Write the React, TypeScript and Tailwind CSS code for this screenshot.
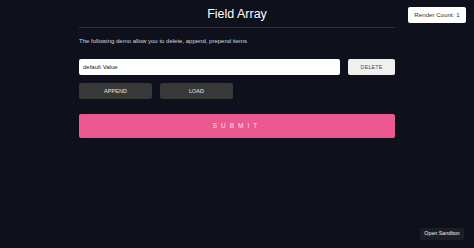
export default function App() {
  return (
    <div className="relative min-h-[248px] w-full bg-[#0e101c] font-['Liberation_Sans',Arial,sans-serif] text-white">
      <div className="absolute right-2 top-[7px] flex h-4 w-[58px] items-center justify-center rounded-[2px] bg-white text-[6.2px] text-[#333]">
        Render Count: 1
      </div>

      <form className="mx-auto flex w-[316px] flex-col pt-[7px]">
        <h1 className="pb-[5px] text-center text-[12.5px] leading-[15px]">Field Array</h1>
        <div className="h-px w-full bg-[#2c2f3d]" />
        <p className="mt-[9px] text-[6px] leading-[8px] text-[#d8d8de]">
          The following demo allow you to delete, append, prepend items
        </p>

        <div className="mt-[14px] flex gap-2">
          <input
            defaultValue="default Value"
            className="h-4 w-[261px] rounded-[2px] bg-white px-1 text-[6px] text-[#222] outline-none"
          />
          <button type="button" className="h-4 w-[47px] rounded-[2px] bg-[#f0f0f0] text-[5.6px] text-[#555]">
            DELETE
          </button>
        </div>

        <div className="mt-2 flex gap-2">
          <button type="button" className="h-4 w-[73px] rounded-[2px] bg-[#383838] text-[5.6px] text-[#e5e5e5]">
            APPEND
          </button>
          <button type="button" className="h-4 w-[73px] rounded-[2px] bg-[#383838] text-[5.6px] text-[#e5e5e5]">
            LOAD
          </button>
        </div>

        <button
          type="submit"
          className="mt-[15px] h-6 w-full rounded-[2px] bg-[#ec5990] text-[6.5px] tracking-[4px] text-[#fbe4ec]"
        >
          SUBMIT
        </button>
      </form>

      <div className="absolute bottom-2 right-[10px] flex h-3 w-[44px] items-center justify-center rounded-[2px] bg-[#1c1e27] text-[5.3px] text-[#f0f0f0]">
        Open Sandbox
      </div>
    </div>
  );
}
